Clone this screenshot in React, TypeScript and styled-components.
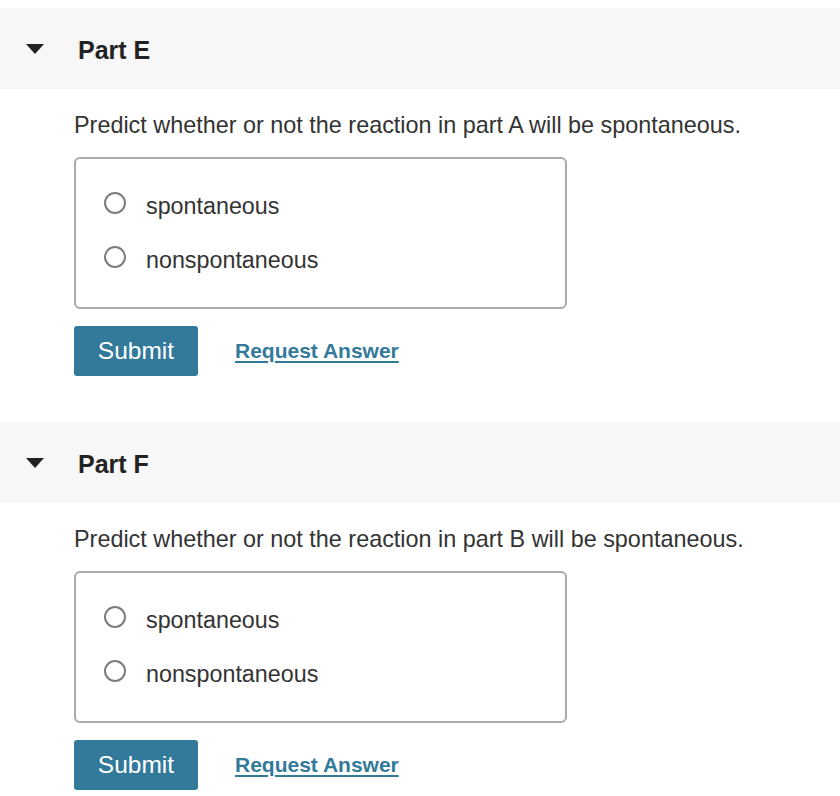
import styled, { createGlobalStyle } from 'styled-components';

const GlobalStyle = createGlobalStyle`
  body {
    margin: 0;
    background: #fff;
    font-family: 'Liberation Sans', Arial, Helvetica, sans-serif;
    color: #333;
  }
`;

const Page = styled.div`
  padding-top: 8px;
  display: flex;
  flex-direction: column;
  gap: 46px;
`;

const Section = styled.section`
  display: flex;
  flex-direction: column;
`;

const Header = styled.div`
  height: 81px;
  background: #f7f7f7;
  display: flex;
  align-items: center;
  padding-left: 26px;
  .caret {
    width: 18px;
    height: 10px;
    margin-right: 34px;
  }
`;

const Title = styled.h2`
  margin: 4px 0 0;
  font-size: 25px;
  font-weight: 700;
  color: #222;
`;

const Body = styled.div`
  padding-left: 74px;
  display: flex;
  flex-direction: column;
  align-items: flex-start;
`;

const Prompt = styled.p`
  margin: 21px 0 17px;
  font-size: 23.4px;
  line-height: 30px;
`;

const Choices = styled.fieldset`
  box-sizing: border-box;
  width: 493px;
  height: 152px;
  margin: 0;
  padding: 29px 0 0 28px;
  border: 2px solid #aaa;
  border-radius: 6px;
  display: flex;
  flex-direction: column;
  gap: 24px;
`;

const Choice = styled.label`
  display: flex;
  align-items: center;
  gap: 20px;
  height: 30px;
  font-size: 23.3px;
`;

const ChoiceText = styled.span`
  margin-top: 6px;
`;

const Radio = styled.input`
  appearance: none;
  box-sizing: border-box;
  margin: 0;
  width: 22px;
  height: 22px;
  border: 2px solid #7c7c7c;
  border-radius: 50%;
  background: #fff;
  flex: none;
`;

const Actions = styled.div`
  margin-top: 17px;
  display: flex;
  align-items: center;
  gap: 37px;
`;

const SubmitButton = styled.button`
  width: 124px;
  height: 50px;
  border: none;
  border-radius: 3px;
  background: #337a9a;
  color: #fff;
  font-family: inherit;
  font-size: 24.5px;
  padding: 0;
`;

const AnswerLink = styled.a`
  color: #337a9a;
  font-weight: 700;
  font-size: 21px;
  text-decoration: underline;
  text-underline-offset: 3px;
  text-decoration-thickness: 2px;
`;

type PartProps = {
  label: string;
  part: string;
};

const Part = ({ label, part }: PartProps) => (
  <Section>
    <Header>
      <svg className='caret' viewBox='0 0 18 10'>
        <polygon points='0,0 18,0 9,10' fill='#222' />
      </svg>
      <Title>Part {label}</Title>
    </Header>
    <Body>
      <Prompt>
        Predict whether or not the reaction in part {part} will be spontaneous.
      </Prompt>
      <Choices>
        {['spontaneous', 'nonspontaneous'].map((opt) => (
          <Choice key={opt}>
            <Radio type='radio' name={`part-${label}`} />
            <ChoiceText>{opt}</ChoiceText>
          </Choice>
        ))}
      </Choices>
      <Actions>
        <SubmitButton>Submit</SubmitButton>
        <AnswerLink href='#'>Request Answer</AnswerLink>
      </Actions>
    </Body>
  </Section>
);

const App = () => (
  <>
    <GlobalStyle />
    <Page>
      <Part label='E' part='A' />
      <Part label='F' part='B' />
    </Page>
  </>
);

export default App;
